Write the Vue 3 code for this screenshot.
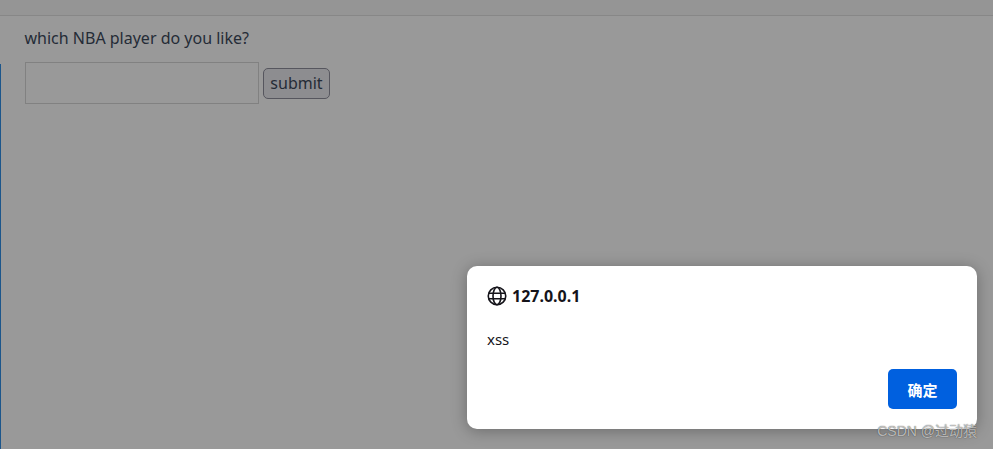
<script setup>
const title = '127.0.0.1'
</script>

<template>
  <div class="page">
    <div class="topbar"></div>
    <div class="body">
      <div class="rail"></div>
      <div class="content">
        <p class="question">which NBA player do you like?</p>
        <form class="form" @submit.prevent>
          <input class="field" type="text" />
          <button class="submit" type="submit">submit</button>
        </form>
      </div>
    </div>

    <div class="scrim"></div>

    <div class="dialog">
      <div class="head">
        <svg class="globe" viewBox="0 0 20 20" width="20" height="20" fill="none" stroke="#15141a" stroke-width="1.6">
          <circle cx="10" cy="10" r="8.75" />
          <ellipse cx="10" cy="10" rx="4" ry="8.75" />
          <path d="M1.6 7.2h16.8M1.6 12.8h16.8" />
        </svg>
        <span class="host">{{ title }}</span>
      </div>
      <div class="message">xss</div>
      <div class="actions">
        <button class="ok" type="button">确定</button>
      </div>
    </div>

    <div class="mark">CSDN @过动猿</div>
  </div>
</template>

<style>
html, body { margin: 0; padding: 0; }
</style>

<style scoped>
.page {
  position: relative;
  width: 993px;
  height: 449px;
  overflow: hidden;
  background: #fff;
  display: flex;
  flex-direction: column;
  font-family: "Noto Sans", "Noto Sans CJK SC", sans-serif;
}
.topbar {
  height: 15px;
  flex: none;
  background: #f8f8f8;
  border-bottom: 1px solid #e2e2e2;
}
.body {
  flex: 1;
  display: flex;
  min-height: 0;
}
.rail {
  width: 1px;
  flex: none;
  margin-top: 48px;
  background: #2f8fe8;
}
.content {
  padding: 10px 0 0 24px;
}
.question {
  margin: 0 0 12px -0.5px;
  font-size: 16px;
  line-height: 24px;
  color: #3d4a5c;
}
.form {
  display: flex;
  align-items: center;
  gap: 4px;
}
.field {
  box-sizing: border-box;
  width: 234px;
  height: 42px;
  margin: 0;
  padding: 0 8px;
  border: 1px solid #d8d8d8;
  background: #fff;
  outline: none;
}
.submit {
  box-sizing: border-box;
  width: 67px;
  height: 31px;
  padding: 0;
  margin: 0;
  font-family: inherit;
  font-size: 16px;
  color: #3d4a5c;
  background: #ebebf0;
  border: 1px solid #8f8f9d;
  border-radius: 5px;
}
.scrim {
  position: absolute;
  inset: 0;
  background: rgba(0, 0, 0, 0.4);
}
.dialog {
  position: absolute;
  left: 467px;
  top: 266px;
  width: 510px;
  height: 163px;
  box-sizing: border-box;
  padding: 20px;
  background: #fff;
  border-radius: 10px;
  box-shadow: 0 2px 16px rgba(0, 0, 0, 0.3);
  display: flex;
  flex-direction: column;
}
.head {
  display: flex;
  align-items: center;
  gap: 5px;
  height: 21px;
  margin-top: -1px;
}
.globe { flex: none; }
.host {
  font-size: 16px;
  font-weight: 700;
  color: #15141a;
}
.message {
  margin-top: 23px;
  font-size: 15px;
  line-height: 20px;
  color: #15141a;
}
.actions {
  margin-top: auto;
  display: flex;
  justify-content: flex-end;
}
.ok {
  width: 69px;
  height: 40px;
  padding: 0;
  border: 0;
  border-radius: 5px;
  background: #0060df;
  color: #fff;
  font-family: inherit;
  font-size: 15px;
  font-weight: 700;
  margin: 3px 0 0;
}
.mark {
  position: absolute;
  right: 16px;
  top: 421px;
  font-family: "Liberation Sans", "Noto Sans CJK SC", sans-serif;
  font-size: 14px;
  line-height: 20px;
  color: rgba(255, 255, 255, 0.65);
  text-shadow: 0 0 1px rgba(40, 40, 40, 1);
}
</style>
